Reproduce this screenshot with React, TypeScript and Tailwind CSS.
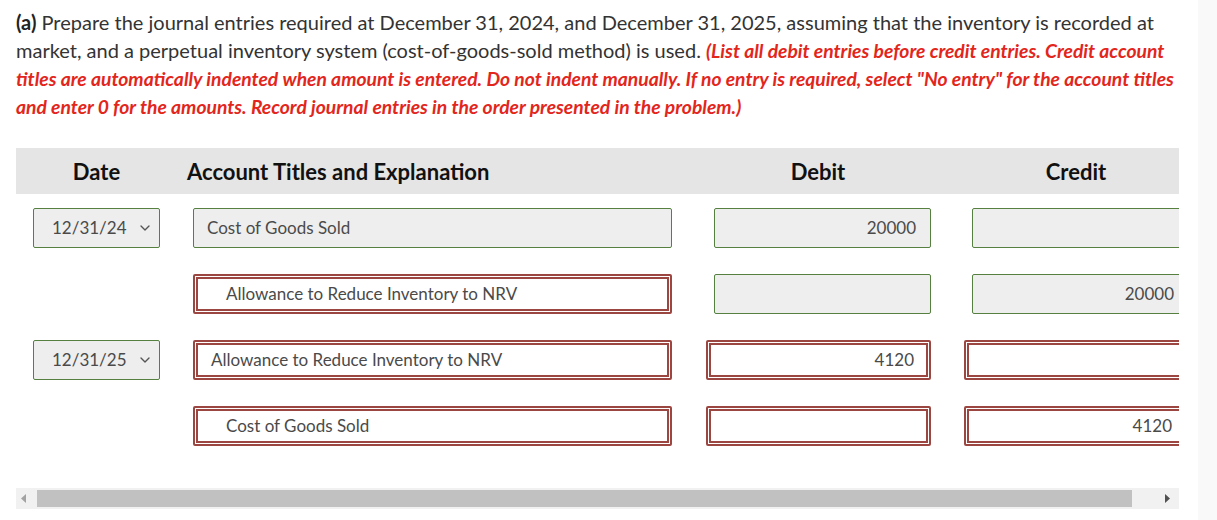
import { ChevronDown } from "lucide-react";

type Cell = { text: string; ok: boolean };

type Row = {
  date?: string;
  account: Cell;
  indent: boolean;
  debit: Cell;
  credit: Cell;
};

const rows: Row[] = [
  {
    date: "12/31/24",
    account: { text: "Cost of Goods Sold", ok: true },
    indent: false,
    debit: { text: "20000", ok: true },
    credit: { text: "", ok: true },
  },
  {
    account: { text: "Allowance to Reduce Inventory to NRV", ok: false },
    indent: true,
    debit: { text: "", ok: true },
    credit: { text: "20000", ok: true },
  },
  {
    date: "12/31/25",
    account: { text: "Allowance to Reduce Inventory to NRV", ok: false },
    indent: false,
    debit: { text: "4120", ok: false },
    credit: { text: "", ok: false },
  },
  {
    account: { text: "Cost of Goods Sold", ok: false },
    indent: true,
    debit: { text: "", ok: false },
    credit: { text: "4120", ok: false },
  },
];

const okBox = "border border-[#55803f] bg-[#eeeeee] rounded-[2px]";
const badBox = "border-[5px] border-double border-[#9c4641] bg-white rounded-[2px]";

function AmountField({ cell }: { cell: Cell }) {
  return (
    <div
      className={
        cell.ok
          ? `${okBox} ml-[25px] w-[217px] h-10 flex items-center justify-end pr-[14px]`
          : `${badBox} ml-[17px] w-[225px] h-10 flex items-center justify-end pr-[12px]`
      }
    >
      <span className="text-[17px] text-[#4a4a4a]">{cell.text}</span>
    </div>
  );
}

export default function App() {
  return (
    <div className="w-[1217px] h-[520px] flex bg-white font-['Lato',sans-serif] overflow-hidden">
      <div className="w-[1198px] pl-4 pt-2">
        {/* Question text */}
        <p className="text-[20px] leading-[28px] text-[#333]">
          <b className="text-[#222]">(a)</b> Prepare the journal entries required at December 31, 2024, and
          December 31, 2025, assuming that the inventory is recorded at market, and a perpetual inventory system
          (cost-of-goods-sold method) is used.{" "}
          <span className="text-[19.3px] leading-[26px] font-bold italic text-[#e2261c]">
            (List all debit entries before credit entries. Credit account titles are automatically indented when
            amount is entered. Do not indent manually. If no entry is required, select "No entry" for the account
            titles and enter 0 for the amounts. Record journal entries in the order presented in the problem.)
          </span>
        </p>

        {/* Journal table, clipped by horizontal scroll */}
        <div className="mt-7 w-[1163px] overflow-hidden">
          <div className="w-[1205px]">
            <div className="flex h-[46px] items-center bg-[#e5e5e5] text-[22px] font-bold text-[#111]">
              <div className="w-[161px] text-center">Date</div>
              <div className="w-[512px] pl-[10px]">Account Titles and Explanation</div>
              <div className="w-[258px] text-center">Debit</div>
              <div className="w-[258px] text-center">Credit</div>
            </div>

            <div className="flex flex-col gap-[26px] pt-[14px]">
              {rows.map((r, i) => (
                <div key={i} className="flex h-10">
                  <div className="w-[161px] pl-[17px]">
                    {r.date && (
                      <div className={`${okBox} w-[127px] h-10 flex items-center pl-[18px] pr-[6px]`}>
                        <span className="text-[17px] text-[#4a4a4a] flex-1">{r.date}</span>
                        <ChevronDown size={16} strokeWidth={2} className="text-[#555]" />
                      </div>
                    )}
                  </div>
                  <div className="w-[512px] pl-4">
                    <div
                      className={
                        r.account.ok
                          ? `${okBox} w-[479px] h-10 flex items-center ${r.indent ? "pl-[33px]" : "pl-[13px]"}`
                          : `${badBox} w-[479px] h-10 flex items-center ${r.indent ? "pl-[28px]" : "pl-[13px]"}`
                      }
                    >
                      <span className="text-[17px] text-[#4a4a4a]">{r.account.text}</span>
                    </div>
                  </div>
                  <div className="w-[258px]">
                    <AmountField cell={r.debit} />
                  </div>
                  <div className="w-[258px]">
                    <AmountField cell={r.credit} />
                  </div>
                </div>
              ))}
            </div>
          </div>
        </div>

        {/* Horizontal scrollbar */}
        <div className="mt-[42px] w-[1163px] h-[21px] bg-[#f1f1f1] flex items-center px-[5px]">
          <svg width="6" height="9" viewBox="0 0 6 9" className="shrink-0">
            <path d="M5 0 L0 4.5 L5 9 Z" fill="#a3a3a3" />
          </svg>
          <div className="ml-[10px] w-[1095px] h-[17px] bg-[#c1c1c1]" />
          <div className="flex-1" />
          <svg width="6" height="9" viewBox="0 0 6 9" className="shrink-0 mr-[4px]">
            <path d="M1 0 L6 4.5 L1 9 Z" fill="#505050" />
          </svg>
        </div>
      </div>
      <div className="w-[19px] bg-[#f9f9f9]" />
    </div>
  );
}
